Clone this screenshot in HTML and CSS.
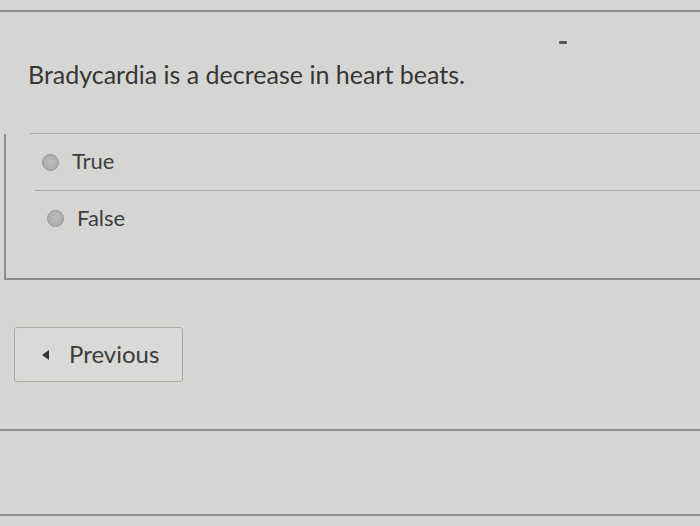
FILE: index.html
```html
<!DOCTYPE html>
<html>
<head>
<meta charset="utf-8">
<link rel="stylesheet" href="styles.css">
</head>
<body>
<div class="page">
  <div class="topline"></div>
  <div class="card">
    <div class="card-top">
      <div class="card-head"><span class="mark"></span></div>
      <div class="question">Bradycardia is a decrease in heart beats.</div>
      <div class="sep sep-a"></div>
    </div>
    <div class="card-body">
      <label class="option opt-true"><span class="radio"></span><span class="opt-text">True</span></label>
      <div class="sep sep-b"></div>
      <label class="option opt-false"><span class="radio"></span><span class="opt-text">False</span></label>
    </div>
  </div>
  <div class="nav">
    <button class="prev"><span class="tri"></span><span>Previous</span></button>
  </div>
  <div class="rule rule-1"></div>
  <div class="rule rule-2"></div>
</div>
</body>
</html>
```

FILE: styles.css
```css
html, body {
  margin: 0;
  padding: 0;
  background: #d5d6d3;
}
.page {
  width: 700px;
  height: 526px;
  overflow: hidden;
  font-family: Lato, "Open Sans", sans-serif;
  color: #3d3d3d;
}
.topline {
  height: 10px;
  border-bottom: 2px solid #8c8c8a;
}
.card {
  margin-left: 4px;
}
.card-top {
  height: 122px;
}
.card-head {
  height: 47px;
  display: flex;
  align-items: flex-end;
}
.mark {
  display: block;
  width: 8px;
  height: 3px;
  background: #555;
  border-radius: 1px;
  margin-left: 555px;
  margin-bottom: 15px;
}
.question {
  font-size: 25px;
  line-height: 30px;
  padding-left: 24px;
  color: #363636;
}
.sep {
  height: 0;
  border-top: 1px solid #a9aaa7;
}
.sep-a { margin-left: 26px; margin-top: 44px; }
.sep-b { margin-left: 29px; }
.card-body {
  border-left: 2px solid #8e8e8c;
  border-bottom: 2px solid #8a8a88;
  height: 146px;
  box-sizing: border-box;
}
.option {
  display: flex;
  align-items: center;
  height: 56px;
  font-size: 22px;
  color: #3e3e3e;
}
.opt-true { padding-left: 36px; }
.opt-false { padding-left: 41px; height: 54px; }
.radio {
  width: 15px;
  height: 15px;
  border-radius: 50%;
  background: radial-gradient(circle at 50% 45%, #bdbebb 0%, #adaeab 70%, #a2a3a0 100%);
  border: 1px solid #959693;
  margin-right: 13px;
  flex: none;
}
.opt-true .opt-text { margin-top: -4px; }
.opt-false .opt-text { margin-top: -2px; }
.nav {
  padding-top: 47px;
  padding-left: 14px;
  height: 149px;
  box-sizing: border-box;
}
.prev {
  display: flex;
  align-items: center;
  width: 169px;
  height: 55px;
  box-sizing: border-box;
  border: 1px solid #a9aaa6;
  border-radius: 3px;
  background: #d9dad7;
  font-family: Lato, "Open Sans", sans-serif;
  font-size: 24px;
  color: #3c3c3c;
  padding: 0 0 0 27px;
  margin: 0;
}
.tri {
  width: 0;
  height: 0;
  border-top: 5px solid transparent;
  border-bottom: 5px solid transparent;
  border-right: 7px solid #333;
  margin-right: 20px;
}
.prev span:last-child { margin-top: -2px; }
.rule {
  border-top: 2px solid #8d8e8b;
}
.rule-2 { margin-top: 83px; }
```
